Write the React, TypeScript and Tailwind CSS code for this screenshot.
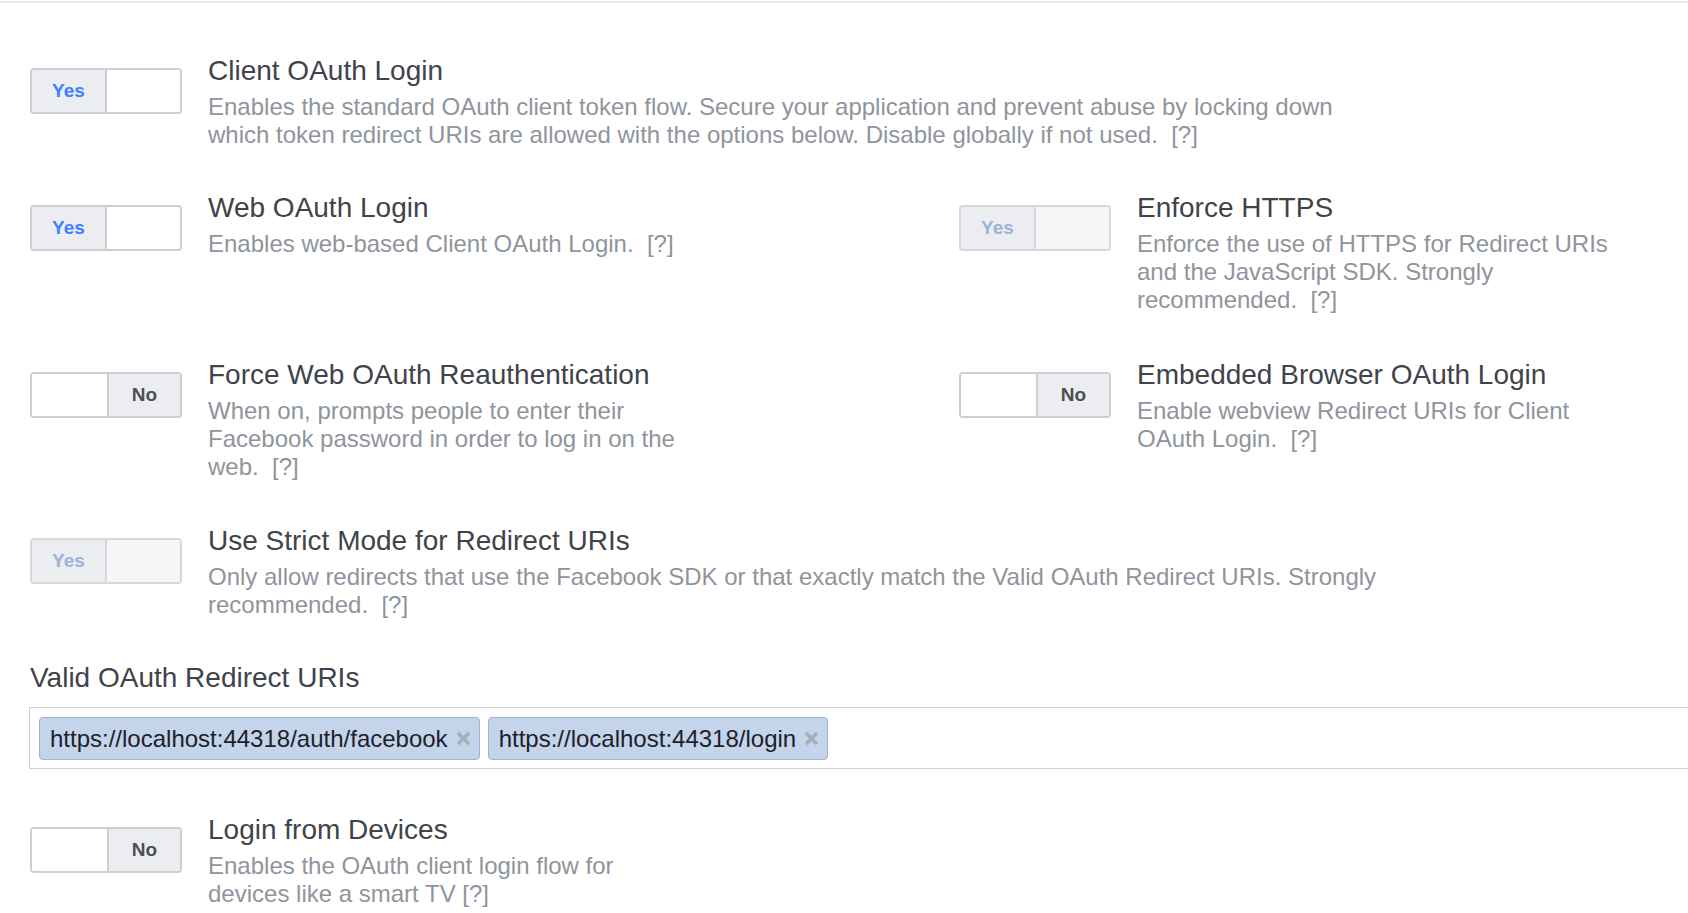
import React from "react";

type ToggleProps = { on: boolean; disabled?: boolean };

function Toggle({ on, disabled }: ToggleProps) {
  if (on) {
    return (
      <div
        className={
          "mt-[13px] flex h-[46px] w-[152px] shrink-0 overflow-hidden rounded-[4px] border-2 " +
          (disabled ? "border-[#d5d8dc]" : "border-[#ccd0d5]")
        }
      >
        <div
          className={
            "flex flex-1 items-center justify-center bg-[#ebedf0] text-[19px] font-bold " +
            (disabled ? "text-[#9cb4d8]" : "text-[#4080ff]")
          }
        >
          Yes
        </div>
        <div
          className={
            "flex-1 border-l-2 " +
            (disabled ? "border-[#d5d8dc] bg-[#f5f6f7]" : "border-[#ccd0d5] bg-white")
          }
        />
      </div>
    );
  }
  return (
    <div className="mt-[13px] flex h-[46px] w-[152px] shrink-0 overflow-hidden rounded-[4px] border-2 border-[#ccd0d5]">
      <div className="w-[77px] shrink-0 border-r-2 border-[#ccd0d5] bg-white" />
      <div className="flex flex-1 items-center justify-center bg-[#ebedf0] text-[19px] font-bold text-[#4b4f56]">
        No
      </div>
    </div>
  );
}

type SettingProps = {
  on: boolean;
  disabled?: boolean;
  title: string;
  desc: string;
  wide?: boolean;
};

function Setting({ on, disabled, title, desc, wide }: SettingProps) {
  return (
    <div className="flex items-start">
      <Toggle on={on} disabled={disabled} />
      <div className={"ml-[26px] " + (wide ? "w-[1182px]" : "w-[480px]")}>
        <div className="text-[28px] leading-[32px] text-[#40444a]">{title}</div>
        <div className="mt-[6px] text-[24px] leading-[28px] text-[#90949c]">{desc}</div>
      </div>
    </div>
  );
}

function Chip({ label }: { label: string }) {
  return (
    <div className="flex h-[43px] items-center rounded-[4px] border border-[#9db2d6] bg-[#c4d4ea] pl-[10px] pr-[8px]">
      <span className="text-[24px] leading-[28px] text-[#1d2129]">{label}</span>
      <svg className="ml-[8px]" width="15" height="15" viewBox="0 0 15 15">
        <path
          d="M2 2 L13 13 M13 2 L2 13"
          stroke="#a5adb9"
          strokeWidth="3.4"
          strokeLinecap="butt"
        />
      </svg>
    </div>
  );
}

export default function App() {
  return (
    <div className="h-[913px] w-full overflow-hidden bg-white font-['Liberation_Sans',Arial,sans-serif]">
      <div className="mt-[1px] h-[2px] w-full bg-[#e9ebee]" />
      <div className="pl-[30px] pt-[52px]">
        <Setting
          on
          wide
          title="Client OAuth Login"
          desc={
            "Enables the standard OAuth client token flow. Secure your application and prevent abuse by locking down which token redirect URIs are allowed with the options below. Disable globally if not used.\u00a0 [?]"
          }
        />

        <div className="mt-[43px] flex items-start">
          <div className="w-[929px] shrink-0">
            <Setting on title="Web OAuth Login" desc={"Enables web-based Client OAuth Login.\u00a0 [?]"} />
          </div>
          <Setting
            on
            disabled
            title="Enforce HTTPS"
            desc={"Enforce the use of HTTPS for Redirect URIs and the JavaScript SDK. Strongly recommended.\u00a0 [?]"}
          />
        </div>

        <div className="mt-[45px] flex items-start">
          <div className="w-[929px] shrink-0">
            <Setting
              on={false}
              title="Force Web OAuth Reauthentication"
              desc={"When on, prompts people to enter their Facebook password in order to log in on the web.\u00a0 [?]"}
            />
          </div>
          <Setting
            on={false}
            title="Embedded Browser OAuth Login"
            desc={"Enable webview Redirect URIs for Client OAuth Login.\u00a0 [?]"}
          />
        </div>

        <div className="mt-[44px]">
          <Setting
            on
            disabled
            wide
            title="Use Strict Mode for Redirect URIs"
            desc={
              "Only allow redirects that use the Facebook SDK or that exactly match the Valid OAuth Redirect URIs. Strongly recommended.\u00a0 [?]"
            }
          />
        </div>

        <div className="mt-[43px] text-[28px] leading-[32px] text-[#40444a]">Valid OAuth Redirect URIs</div>

        <div className="-ml-px mt-[13px] flex h-[62px] items-start gap-[8px] border border-r-0 border-[#ccd0d5] pl-[9px] pt-[9px]">
          <Chip label="https://localhost:44318/auth/facebook" />
          <Chip label="https://localhost:44318/login" />
        </div>

        <div className="mt-[45px]">
          <Setting
            on={false}
            title="Login from Devices"
            desc="Enables the OAuth client login flow for devices like a smart TV [?]"
          />
        </div>
      </div>
    </div>
  );
}
